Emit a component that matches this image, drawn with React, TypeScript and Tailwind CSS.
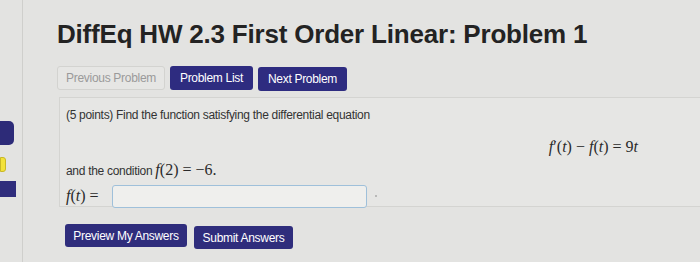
import React from "react";

const sans = "font-['Liberation_Sans',Arial,sans-serif] text-[12px] tracking-[-0.3px] whitespace-nowrap";
const serif = "font-['Liberation_Serif','DejaVu_Serif',serif]";

function I({ children }: { children: React.ReactNode }) {
  return <span className="italic">{children}</span>;
}

export default function App() {
  return (
    <div className="w-[700px] h-[262px] overflow-hidden bg-[#e3e3e1] flex">
      <div className="w-[23px] shrink-0 border-r border-[#cfcfcc] flex flex-col items-start">
        <div className="mt-[121px] w-[14px] h-[24px] bg-[#2d2b78] rounded-r-[5px]" />
        <div className="mt-[12px] w-[6px] h-[15px] bg-[#f3e23a] border border-[#c9b826] rounded-r-[3px]" />
        <div className="mt-[9px] w-[16px] h-[16px] bg-[#2f2d7c]" />
      </div>
      <div className="flex-1 pl-[34px] flex flex-col">
        <h1 className="mt-[18px] font-['Liberation_Sans',Arial,sans-serif] font-bold text-[26px] leading-[32px] tracking-[-0.2px] text-[#232323]">
          DiffEq HW 2.3 First Order Linear: Problem 1
        </h1>
        <div className={`mt-[16px] flex items-start gap-[5px] ${sans}`}>
          <div className="w-[108px] h-[24px] flex items-center justify-center rounded-[3px] border border-[#d3d3d0] bg-[#e6e6e4] text-[#9a9a9a]">
            Previous Problem
          </div>
          <div className="w-[83px] h-[24px] flex items-center justify-center rounded-[3px] bg-[#2e2c80] text-white">
            Problem List
          </div>
          <div className="mt-[1px] w-[89px] h-[24px] flex items-center justify-center rounded-[3px] bg-[#2e2c80] text-white">
            Next Problem
          </div>
        </div>
        <div className={`mt-[6px] ml-[2px] h-[110px] border border-r-0 border-[#d4d4d1] bg-[#e6e6e4] pl-[6px] ${sans} text-[#333]`}>
          <div className="mt-[9px] leading-[16px]">
            (5 points) Find the function satisfying the differential equation
          </div>
          <div className={`mt-[15px] flex justify-end pr-[62px] ${serif} text-[16px] tracking-normal leading-[18px] text-[#2a2a2a]`}>
            <span>
              <I>f</I>′(<I>t</I>) − <I>f</I>(<I>t</I>) = 9<I>t</I>
            </span>
          </div>
          <div className="mt-[5px] leading-[18px] flex items-baseline">
            <span>and the condition&nbsp;</span>
            <span className={`${serif} text-[16px] tracking-normal text-[#2a2a2a]`}>
              <I>f</I>(2) = −6.
            </span>
          </div>
          <div className="mt-[4px] flex items-center">
            <span className={`${serif} text-[16px] tracking-normal text-[#2a2a2a] w-[46px]`}>
              <I>f</I>(<I>t</I>) =
            </span>
            <div className="w-[255px] h-[23px] rounded-[3px] border border-[#9fc0da] bg-[#efefed]" />
            <span className="ml-[8px] w-[2px] h-[2px] rounded-full bg-[#aaa]" />
          </div>
        </div>
        <div className={`mt-[17px] ml-[8px] flex items-start gap-[7px] ${sans} text-white`}>
          <div className="w-[122px] h-[23px] flex items-center justify-center rounded-[3px] bg-[#2f2d7c]">
            Preview My Answers
          </div>
          <div className="mt-[2px] w-[99px] h-[23px] flex items-center justify-center rounded-[3px] bg-[#2f2d7c]">
            Submit Answers
          </div>
        </div>
        <div className={`mt-[10px] ml-[8px] ${sans} text-[#555]`}>
          You have attempted this problem 0 times.
        </div>
      </div>
    </div>
  );
}
